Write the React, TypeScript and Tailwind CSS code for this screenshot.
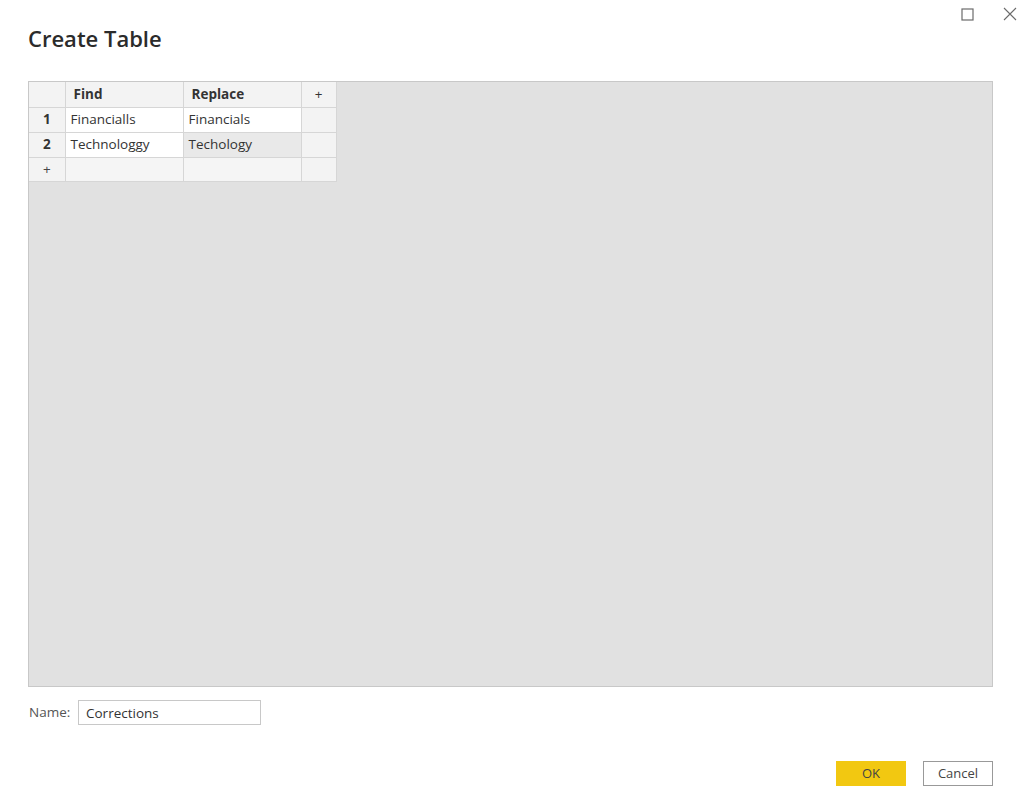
import React from "react";

const font = { fontFamily: '"Open Sans", "Noto Sans", sans-serif' };

const rows = [
  { n: "1", find: "Financialls", replace: "Financials", selected: false },
  { n: "2", find: "Technologgy", replace: "Techology", selected: true },
];

export default function App() {
  return (
    <div
      className="relative flex h-[802px] w-[1024px] flex-col bg-white pl-[28px] pr-[31px] text-[#333]"
      style={font}
    >
      {/* window controls */}
      <div className="absolute right-[7px] top-[7px] flex items-center gap-[29px]">
        <svg width="13" height="13" viewBox="0 0 13 13">
          <rect x="1" y="1" width="11" height="11" fill="none" stroke="#6b6b6b" strokeWidth="1.2" />
        </svg>
        <svg width="14" height="14" viewBox="0 0 14 14">
          <path d="M1 1 L13 13 M13 1 L1 13" stroke="#6b6b6b" strokeWidth="1.1" />
        </svg>
      </div>

      <h1 className="mt-[22px] h-[32px] text-[22px] font-semibold leading-[32px] text-[#2b2b2b]">
        Create Table
      </h1>

      <div className="mt-[27px] h-[606px] border border-[#c8c8c8] bg-[#e1e1e1]">
        <table className="border-collapse text-[13.5px]">
          <thead>
            <tr className="h-[25px]">
              <th className="w-[36px] border border-t-0 border-l-0 border-[#d6d6d6] bg-[#f3f3f3]" />
              <th className="w-[118px] border border-t-0 border-[#d6d6d6] bg-[#f3f3f3] pl-[8px] text-left font-bold">
                Find
              </th>
              <th className="w-[118px] border border-t-0 border-[#d6d6d6] bg-[#f3f3f3] pl-[8px] text-left font-bold">
                Replace
              </th>
              <th className="w-[35px] border border-t-0 border-[#d6d6d6] bg-[#f3f3f3] text-center font-normal">
                +
              </th>
            </tr>
          </thead>
          <tbody>
            {rows.map((r) => (
              <tr key={r.n} className="h-[25px]">
                <td className="border border-l-0 border-[#d6d6d6] bg-[#f3f3f3] text-center font-bold">
                  {r.n}
                </td>
                <td className="border border-[#d6d6d6] bg-white pl-[5px]">{r.find}</td>
                <td
                  className={`border border-[#d6d6d6] pl-[5px] ${
                    r.selected ? "bg-[#e9e9e9]" : "bg-white"
                  }`}
                >
                  {r.replace}
                </td>
                <td className="border border-[#d6d6d6] bg-[#f3f3f3]" />
              </tr>
            ))}
            <tr className="h-[24px]">
              <td className="border border-l-0 border-[#d6d6d6] bg-[#f3f3f3] text-center text-[#444]">
                +
              </td>
              <td className="border border-[#d6d6d6] bg-[#f5f5f5]" />
              <td className="border border-[#d6d6d6] bg-[#f5f5f5]" />
              <td className="border border-[#d6d6d6] bg-[#f3f3f3]" />
            </tr>
          </tbody>
        </table>
      </div>

      <div className="mt-[13px] flex h-[25px] items-center">
        <span className="w-[50px] pl-[1px] text-[13.5px] text-[#555]">Name:</span>
        <input
          readOnly
          value="Corrections"
          className="h-[25px] w-[183px] border border-[#c8c8c8] px-[7px] text-[13.5px] text-[#333] outline-none"
        />
      </div>

      <div className="mt-[36px] flex justify-end gap-[17px]">
        <button className="h-[25px] w-[70px] bg-[#f2c811] text-[13px] text-[#444]">OK</button>
        <button className="h-[25px] w-[70px] border border-[#999] bg-white text-[13px] text-[#444]">
          Cancel
        </button>
      </div>
    </div>
  );
}
